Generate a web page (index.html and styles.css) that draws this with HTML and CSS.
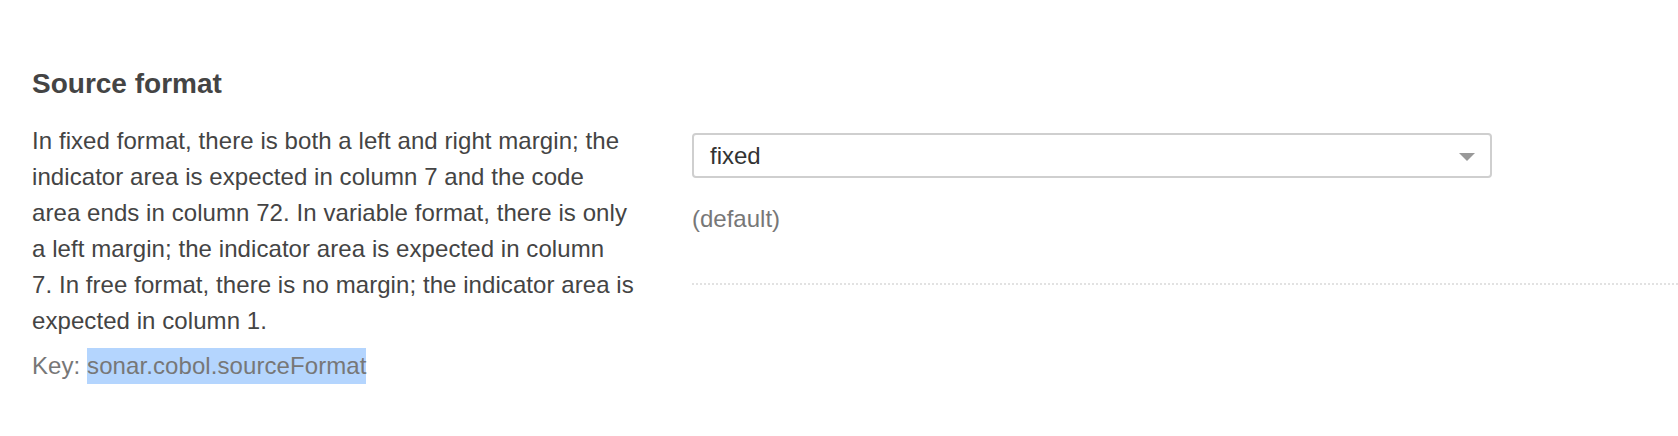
FILE: index.html
```html
<!DOCTYPE html>
<html lang="en">
<head>
<meta charset="utf-8">
<title>Source format</title>
<link rel="stylesheet" href="styles.css">
</head>
<body>
<div class="page">
  <div class="definition">
    <div class="def-left">
      <h3 class="def-title">Source format</h3>
      <div class="def-desc">In fixed format, there is both a left and right margin; the indicator area is expected in column 7 and the code area ends in column 72. In variable format, there is only a left margin; the indicator area is expected in column 7.&nbsp;In free format, there is no margin; the indicator area is expected in column 1.</div>
      <div class="def-key">Key: <span class="key-sel">sonar.cobol.sourceFormat</span></div>
    </div>
    <div class="def-right">
      <div class="select">
        <span class="select-value">fixed</span>
        <span class="select-arrow"></span>
      </div>
      <div class="default-note">(default)</div>
      <div class="def-sep"></div>
    </div>
  </div>
</div>
</body>
</html>
```

FILE: styles.css
```css
html, body {
  margin: 0;
  padding: 0;
  background: #fff;
}

body {
  font-family: "Liberation Sans", Arial, Helvetica, sans-serif;
  font-size: 24px;
  line-height: 36px;
  color: #444;
}

.page {
  padding: 66px 0 0 32px;
}

.definition {
  display: flex;
  align-items: flex-start;
}

.def-left {
  width: 604px;
  margin-right: 56px;
  flex: none;
}

.def-title {
  margin: 0 0 21px;
  font-size: 28px;
  line-height: 36px;
  font-weight: bold;
  color: #444;
}

.def-desc {
  color: #444;
  letter-spacing: 0.07px;
}

.def-key {
  margin-top: 9px;
  color: #777;
  letter-spacing: 0.08px;
}

.key-sel {
  display: inline-block;
  background: #b4d5fe;
  line-height: 36px;
}

.def-right {
  flex: 1;
  padding-top: 67px;
}

.select {
  box-sizing: border-box;
  width: 800px;
  height: 45px;
  border: 2px solid #cfcfcf;
  border-radius: 4px;
  display: flex;
  align-items: center;
  justify-content: space-between;
  padding: 0 15px 0 16px;
  color: #333;
}

.select-arrow {
  width: 0;
  height: 0;
  border-left: 8px solid transparent;
  border-right: 8px solid transparent;
  border-top: 8px solid #999;
  margin-top: 2px;
}

.default-note {
  margin-top: 23px;
  color: #777;
}

.def-sep {
  margin-top: 46px;
  border-top: 2px dotted #e2e2e2;
}
```
